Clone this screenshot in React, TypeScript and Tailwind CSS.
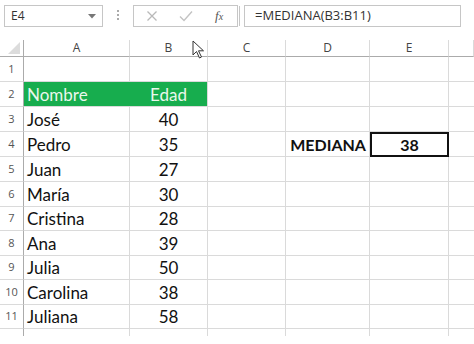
import React from "react";

const rows: { n: number; a: string; b: string; h: string }[] = [
  { n: 1, a: "", b: "", h: "h-[25px]" },
  { n: 2, a: "Nombre", b: "Edad", h: "h-[25px]" },
  { n: 3, a: "José", b: "40", h: "h-[25px]" },
  { n: 4, a: "Pedro", b: "35", h: "h-[25px]" },
  { n: 5, a: "Juan", b: "27", h: "h-[25px]" },
  { n: 6, a: "María", b: "30", h: "h-[25px]" },
  { n: 7, a: "Cristina", b: "28", h: "h-[24px]" },
  { n: 8, a: "Ana", b: "39", h: "h-[25px]" },
  { n: 9, a: "Julia", b: "50", h: "h-[24px]" },
  { n: 10, a: "Carolina", b: "38", h: "h-[25px]" },
  { n: 11, a: "Juliana", b: "58", h: "h-[24px]" },
];

const cols = "grid grid-cols-[24px_106px_78px_78px_84px_79px_25px]";
const cell = "border-r border-b border-[#dadada]";
const calibri = { fontFamily: "Lato, 'Liberation Sans', sans-serif" };
const ui = { fontFamily: "'Open Sans', 'Noto Sans', sans-serif" };

const Cursor = () => (
  <svg width="14" height="19" viewBox="0 0 14 19" className="absolute left-[192px] top-[40px]">
    <path d="M1 1 L1 15 L4.5 11.5 L7.5 18 L9.5 17 L6.5 10.8 L11.5 10.8 Z" fill="#fff" stroke="#333" strokeWidth="1" strokeLinejoin="round" />
  </svg>
);

const Toolbar = () => (
  <div className="flex h-[40px] items-start pt-[5px] text-[#333]" style={ui}>
    <div className="ml-[4px] flex h-[22px] w-[99px] items-center justify-between border border-[#c6c6c6] pl-[6px] pr-[6px] text-[12px]">
      <span>E4</span>
      <svg width="8" height="5" viewBox="0 0 8 5"><path d="M0 0 L8 0 L4 4.5 Z" fill="#777" /></svg>
    </div>
    <div className="flex w-[30px] flex-col items-center justify-center gap-[2px] pt-[5px]">
      <span className="h-[2px] w-[2px] bg-[#aaa]" />
      <span className="h-[2px] w-[2px] bg-[#aaa]" />
      <span className="h-[2px] w-[2px] bg-[#aaa]" />
    </div>
    <div className="flex h-[22px] w-[105px] items-center border border-[#c6c6c6]">
      <svg width="12" height="12" viewBox="0 0 12 12" className="ml-[12px]">
        <path d="M1.5 1.5 L10.5 10.5 M10.5 1.5 L1.5 10.5" stroke="#b9b9b9" strokeWidth="1.3" />
      </svg>
      <svg width="14" height="12" viewBox="0 0 14 12" className="ml-[21px]">
        <path d="M1 6.5 L5 10.5 L13 1.5" stroke="#c3c3c3" strokeWidth="1.4" fill="none" />
      </svg>
      <span className="ml-[22px] text-[13px] italic text-[#555]" style={{ fontFamily: "'Liberation Serif', serif" }}>
        f<span className="text-[10px]">x</span>
      </span>
    </div>
    <div className="ml-[1px] mt-[1px] h-[20px] w-px bg-[#c6c6c6]" />
    <div className="ml-[4px] flex h-[22px] w-[217px] items-center border border-[#c6c6c6] pl-[10px] text-[13px]">
      =MEDIANA(B3:B11)
    </div>
  </div>
);

export default function App() {
  return (
    <div className="relative h-[344px] w-[474px] overflow-hidden bg-white">
      <Toolbar />
      <div className={`${cols} h-[17px] text-[12px] text-[#444]`} style={ui}>
        <div className="relative border-r border-b border-[#ababab]">
          <svg width="12" height="12" viewBox="0 0 12 12" className="absolute bottom-[2px] right-[3px]">
            <path d="M12 0 L12 12 L0 12 Z" fill="#dcdcdc" />
          </svg>
        </div>
        {["A", "B", "C", "D", "E", ""].map((c, i) => (
          <div key={i} className="flex items-center justify-center border-r border-b border-[#ababab] border-r-[#dadada] leading-none">
            {c}
          </div>
        ))}
      </div>
      {rows.map((r) => (
        <div key={r.n} className={`${cols} ${r.h}`}>
          <div className="flex items-center justify-center border-r border-b border-[#ababab] border-b-[#dadada] text-[11px] text-[#555]" style={ui}>
            {r.n}
          </div>
          {r.n === 2 ? (
            <>
              <div className="flex items-end border-b border-[#dadada] bg-[#17ad4e] pb-[1px] pl-[3px] text-[17px] leading-none text-[#eaf7ec]" style={calibri}>
                <span className="pb-[2px]">{r.a}</span>
              </div>
              <div className={`${cell} flex items-end justify-center bg-[#17ad4e] text-[17px] leading-none text-[#eaf7ec]`} style={calibri}>
                <span className="pb-[3px]">{r.b}</span>
              </div>
            </>
          ) : (
            <>
              <div className={`${cell} flex items-end pl-[3px] text-[17px] leading-none text-[#111]`} style={calibri}>
                <span className="pb-[3px]">{r.a}</span>
              </div>
              <div className={`${cell} flex items-end justify-center text-[17px] leading-none text-[#111]`} style={calibri}>
                <span className="pb-[3px]">{r.b}</span>
              </div>
            </>
          )}
          <div className={cell} />
          {r.n === 4 ? (
            <>
              <div className={`${cell} flex items-end justify-end pr-[3px] text-[16px] font-bold leading-none text-[#111]`} style={calibri}>
                <span className="pb-[3px]">MEDIANA</span>
              </div>
              <div className="flex items-end justify-center border-2 border-[#111] text-[16px] font-bold leading-none text-[#111]" style={calibri}>
                <span className="pb-[2px]">38</span>
              </div>
            </>
          ) : (
            <>
              <div className={cell} />
              <div className={cell} />
            </>
          )}
          <div className="border-b border-[#dadada]" />
        </div>
      ))}
      <div className={`${cols} h-[7px]`}>
        <div className="border-r border-[#ababab]" />
        <div className="border-r border-[#dadada]" />
        <div className="border-r border-[#dadada]" />
        <div className="border-r border-[#dadada]" />
        <div className="border-r border-[#dadada]" />
        <div className="border-r border-[#dadada]" />
        <div />
      </div>
      <Cursor />
    </div>
  );
}
